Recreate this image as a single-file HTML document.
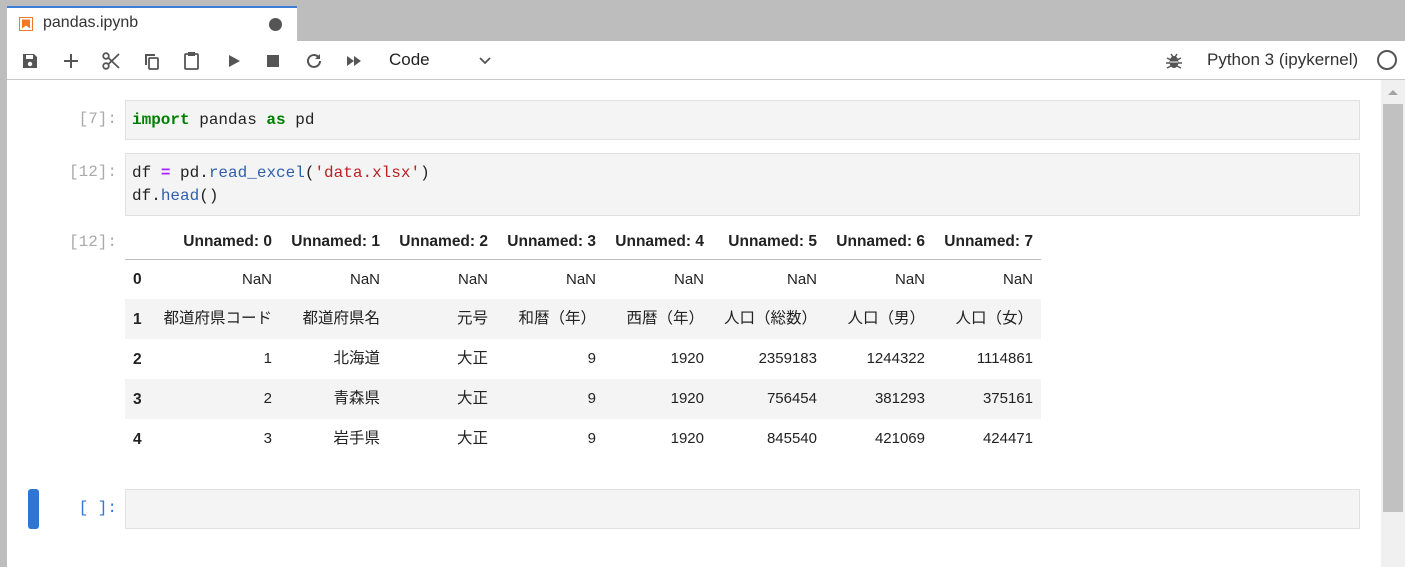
<!DOCTYPE html>
<html><head><meta charset="utf-8"><style>
*{margin:0;padding:0;box-sizing:border-box}
body{width:1405px;height:567px;background:#bdbdbd;position:relative;overflow:hidden;font-family:"Liberation Sans","Noto Sans CJK JP",sans-serif;color:#222}
.abs{position:absolute}
.tab{left:7px;top:6px;width:290px;height:35px;background:#fff;border-top:2px solid #3f7ed6}
.tb{left:7px;top:41px;width:1398px;height:39px;background:#fff;border-bottom:1px solid #c8c8c8}
.main{left:7px;top:80px;width:1398px;height:487px;background:#fff}
.cell{background:#f4f4f4;border:1px solid #e0e0e0;left:125px;width:1235px}
.mono{font-family:"Liberation Mono",monospace;font-size:16px}
.prompt{color:#aaa;width:110px;text-align:right;left:7px}
.ico{fill:#555}
.row{left:125px;width:916px;height:40px}
.c{position:absolute;text-align:right;font-size:15px;line-height:40px;white-space:nowrap}
.h{font-weight:bold;font-size:15.5px}
.j{font-size:15.5px}
</style></head><body>
<div class="abs tab">
 <svg class="abs" style="left:12px;top:9px" width="14" height="14"><rect x="0.5" y="0.5" width="13" height="13" fill="none" stroke="#f37726"/><path d="M3 2.5h8v9l-4-3-4 3z" fill="#f37726"/></svg>
 <div class="abs" style="left:36px;top:6px;font-size:16px;color:#333">pandas.ipynb</div>
 <div class="abs" style="left:262px;top:10px;width:13px;height:13px;border-radius:50%;background:#555"></div>
</div>
<div class="abs tb">
 <svg class="abs" style="left:14px;top:11px" width="18" height="18"><path class="ico" d="M2 2h11l3 3v11H2z"/><rect x="5" y="3" width="7" height="4" fill="#fff"/><circle cx="9" cy="12" r="2.2" fill="#fff"/></svg>
 <svg class="abs" style="left:55px;top:11px" width="18" height="18"><path d="M9 2v14M2 9h14" stroke="#555" stroke-width="2"/></svg>
 <svg class="abs" style="left:94px;top:10px" width="20" height="20"><circle cx="5" cy="15" r="2.8" fill="none" stroke="#555" stroke-width="1.8"/><circle cx="5" cy="5" r="2.8" fill="none" stroke="#555" stroke-width="1.8"/><path d="M7 6.5L18 17M7 13.5L18 3" stroke="#555" stroke-width="1.8"/></svg>
 <svg class="abs" style="left:135px;top:10px" width="20" height="20"><path d="M3 3v11h2V5h8V3z" fill="#555"/><rect x="7" y="7" width="9" height="11" rx="1" fill="none" stroke="#555" stroke-width="1.8"/></svg>
 <svg class="abs" style="left:175px;top:9px" width="20" height="20"><rect x="3" y="4" width="13" height="15" rx="1" fill="none" stroke="#555" stroke-width="1.8"/><rect x="6" y="2" width="7" height="4" fill="#555"/></svg>
 <svg class="abs" style="left:219px;top:12px" width="16" height="16"><path d="M3 2l11 6-11 6z" fill="#555"/></svg>
 <svg class="abs" style="left:259px;top:13px" width="14" height="14"><rect x="1" y="1" width="12" height="12" fill="#555"/></svg>
 <svg class="abs" style="left:297px;top:10px" width="20" height="20"><path d="M16 10a6 6 0 1 1-2-4.5" fill="none" stroke="#555" stroke-width="2"/><path d="M16 3v5h-5z" fill="#555"/></svg>
 <svg class="abs" style="left:338px;top:12px" width="18" height="16"><path d="M2 3l7 5-7 5zM9 3l7 5-7 5z" fill="#555"/></svg>
 <div class="abs" style="left:382px;top:9px;font-size:17px;color:#222">Code</div>
 <svg class="abs" style="left:471px;top:14px" width="14" height="12"><path d="M2 3l5 5 5-5" fill="none" stroke="#555" stroke-width="1.8"/></svg>
 <svg class="abs" style="left:1157px;top:10px" width="20" height="20"><ellipse cx="10" cy="11" rx="4.5" ry="6" fill="#555"/><path d="M3 7l4 2M17 7l-4 2M2 12h4M18 12h-4M3 17l4-2M17 17l-4-2M7 3l2 3M13 3l-2 3" stroke="#555" stroke-width="1.5"/><path d="M6 11h8" stroke="#fff" stroke-width="1"/></svg>
 <div class="abs" style="left:1200px;top:9px;font-size:17px;color:#333">Python 3 (ipykernel)</div>
 <div class="abs" style="left:1370px;top:9px;width:20px;height:20px;border:2px solid #555;border-radius:50%"></div>
</div>
<div class="abs main"></div>
<div class="abs" style="left:1381px;top:80px;width:24px;height:487px;background:#f0f0f0"></div>
<svg class="abs" style="left:1385px;top:86px" width="16" height="12"><path d="M3 9l5-5 5 5z" fill="#a3a3a3"/></svg>
<div class="abs" style="left:1383px;top:104px;width:20px;height:408px;background:#c1c1c1"></div>

<div class="abs prompt mono" style="top:110px">[7]:</div>
<div class="abs cell mono" style="top:100px;height:40px;padding:9px 6px;line-height:20px"><b style="color:#008000">import</b> pandas <b style="color:#008000">as</b> pd</div>

<div class="abs prompt mono" style="top:163px">[12]:</div>
<div class="abs cell mono" style="top:153px;height:63px;padding:8px 6px;line-height:23px">df <b style="color:#aa22ff">=</b> pd.<span style="color:#2f5faa">read_excel</span>(<span style="color:#ba2121">'data.xlsx'</span>)<br>df.<span style="color:#2f5faa">head</span>()</div>

<div class="abs prompt mono" style="top:233px">[12]:</div>
<div class="abs" style="left:125px;top:222px;width:916px;height:38px;border-bottom:1px solid #bdbdbd"></div>
<div class="abs row" style="top:299px;background:#f4f4f4"></div>
<div class="abs row" style="top:379px;background:#f4f4f4"></div>

<div class="abs" style="left:28px;top:489px;width:11px;height:40px;background:#2f75d6;border-radius:3px"></div>
<div class="abs prompt mono" style="top:499px;color:#2f75d6">[ ]:</div>
<div class="abs cell" style="top:489px;height:40px"></div>

<div class="abs c h" style="left:133px;top:260px">0</div>
<div class="abs c h" style="left:133px;top:300px">1</div>
<div class="abs c h" style="left:133px;top:340px">2</div>
<div class="abs c h" style="left:133px;top:380px">3</div>
<div class="abs c h" style="left:133px;top:420px">4</div>

<div class="abs c h" style="right:1133px;top:222px">Unnamed: 0</div>
<div class="abs c h" style="right:1025px;top:222px">Unnamed: 1</div>
<div class="abs c h" style="right:917px;top:222px">Unnamed: 2</div>
<div class="abs c h" style="right:809px;top:222px">Unnamed: 3</div>
<div class="abs c h" style="right:701px;top:222px">Unnamed: 4</div>
<div class="abs c h" style="right:588px;top:222px">Unnamed: 5</div>
<div class="abs c h" style="right:480px;top:222px">Unnamed: 6</div>
<div class="abs c h" style="right:372px;top:222px">Unnamed: 7</div>

<div class="abs c" style="right:1133px;top:260px">NaN</div><div class="abs c" style="right:1025px;top:260px">NaN</div><div class="abs c" style="right:917px;top:260px">NaN</div><div class="abs c" style="right:809px;top:260px">NaN</div><div class="abs c" style="right:701px;top:260px">NaN</div><div class="abs c" style="right:588px;top:260px">NaN</div><div class="abs c" style="right:480px;top:260px">NaN</div><div class="abs c" style="right:372px;top:260px">NaN</div>

<div class="abs c j" style="right:1133px;top:299px">都道府県コード</div><div class="abs c j" style="right:1025px;top:299px">都道府県名</div><div class="abs c j" style="right:917px;top:299px">元号</div><div class="abs c j" style="right:809px;top:299px">和暦（年）</div><div class="abs c j" style="right:701px;top:299px">西暦（年）</div><div class="abs c j" style="right:588px;top:299px">人口（総数）</div><div class="abs c j" style="right:480px;top:299px">人口（男）</div><div class="abs c j" style="right:372px;top:299px">人口（女）</div>

<div class="abs c" style="right:1133px;top:339px">1</div><div class="abs c j" style="right:1025px;top:339px">北海道</div><div class="abs c j" style="right:917px;top:339px">大正</div><div class="abs c" style="right:809px;top:339px">9</div><div class="abs c" style="right:701px;top:339px">1920</div><div class="abs c" style="right:588px;top:339px">2359183</div><div class="abs c" style="right:480px;top:339px">1244322</div><div class="abs c" style="right:372px;top:339px">1114861</div>

<div class="abs c" style="right:1133px;top:379px">2</div><div class="abs c j" style="right:1025px;top:379px">青森県</div><div class="abs c j" style="right:917px;top:379px">大正</div><div class="abs c" style="right:809px;top:379px">9</div><div class="abs c" style="right:701px;top:379px">1920</div><div class="abs c" style="right:588px;top:379px">756454</div><div class="abs c" style="right:480px;top:379px">381293</div><div class="abs c" style="right:372px;top:379px">375161</div>

<div class="abs c" style="right:1133px;top:419px">3</div><div class="abs c j" style="right:1025px;top:419px">岩手県</div><div class="abs c j" style="right:917px;top:419px">大正</div><div class="abs c" style="right:809px;top:419px">9</div><div class="abs c" style="right:701px;top:419px">1920</div><div class="abs c" style="right:588px;top:419px">845540</div><div class="abs c" style="right:480px;top:419px">421069</div><div class="abs c" style="right:372px;top:419px">424471</div>
</body></html>
